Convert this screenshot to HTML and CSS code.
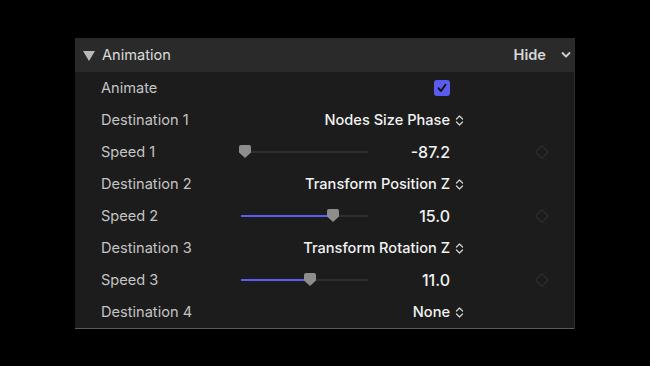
FILE: index.html
```html
<!DOCTYPE html>
<html>
<head>
<meta charset="utf-8">
<link rel="stylesheet" href="styles.css">
</head>
<body>
<div class="panel">
  <div class="header">
    <span class="disclosure"></span>
    <span class="title">Animation</span>
    <span class="hide">Hide</span>
    <svg class="chev-down" width="10" height="8" viewBox="0 0 10 8"><path d="M1.5 2 L5 5.5 L8.5 2" fill="none" stroke="#cfcfcf" stroke-width="1.8" stroke-linecap="round" stroke-linejoin="round"/></svg>
  </div>
  <div class="rows">
    <div class="row">
      <span class="label">Animate</span>
      <div class="mid"><span class="checkbox"><svg width="12" height="12" viewBox="0 0 12 12"><path d="M2.5 6.3 L5 9 L9.5 2.8" fill="none" stroke="#111" stroke-width="1.9" stroke-linecap="round" stroke-linejoin="round"/></svg></span></div>
      <span class="after"></span>
      <span class="kf-slot"></span>
    </div>
    <div class="row">
      <span class="label">Destination 1</span>
      <div class="mid"><span class="value">Nodes Size Phase</span></div>
      <span class="after"><svg class="updown" width="9" height="13" viewBox="0 0 9 13"><path d="M1.5 5 L4.5 2 L7.5 5 M1.5 8 L4.5 11 L7.5 8" fill="none" stroke="#d0d0d0" stroke-width="1.3" stroke-linecap="round" stroke-linejoin="round"/></svg></span>
      <span class="kf-slot"></span>
    </div>
    <div class="row">
      <span class="label">Speed 1</span>
      <div class="mid">
        <div class="slider"><div class="track"></div><div class="fill" style="width:4px"></div><div class="thumb" style="left:4px"></div></div>
        <span class="value num">-87.2</span>
      </div>
      <span class="after"></span>
      <span class="kf-slot"><span class="kf"></span></span>
    </div>
    <div class="row">
      <span class="label">Destination 2</span>
      <div class="mid"><span class="value">Transform Position Z</span></div>
      <span class="after"><svg class="updown" width="9" height="13" viewBox="0 0 9 13"><path d="M1.5 5 L4.5 2 L7.5 5 M1.5 8 L4.5 11 L7.5 8" fill="none" stroke="#d0d0d0" stroke-width="1.3" stroke-linecap="round" stroke-linejoin="round"/></svg></span>
      <span class="kf-slot"></span>
    </div>
    <div class="row">
      <span class="label">Speed 2</span>
      <div class="mid">
        <div class="slider"><div class="track"></div><div class="fill" style="width:92px"></div><div class="thumb" style="left:92px"></div></div>
        <span class="value num">15.0</span>
      </div>
      <span class="after"></span>
      <span class="kf-slot"><span class="kf"></span></span>
    </div>
    <div class="row">
      <span class="label">Destination 3</span>
      <div class="mid"><span class="value">Transform Rotation Z</span></div>
      <span class="after"><svg class="updown" width="9" height="13" viewBox="0 0 9 13"><path d="M1.5 5 L4.5 2 L7.5 5 M1.5 8 L4.5 11 L7.5 8" fill="none" stroke="#d0d0d0" stroke-width="1.3" stroke-linecap="round" stroke-linejoin="round"/></svg></span>
      <span class="kf-slot"></span>
    </div>
    <div class="row">
      <span class="label">Speed 3</span>
      <div class="mid">
        <div class="slider"><div class="track"></div><div class="fill" style="width:69px"></div><div class="thumb" style="left:69px"></div></div>
        <span class="value num">11.0</span>
      </div>
      <span class="after"></span>
      <span class="kf-slot"><span class="kf"></span></span>
    </div>
    <div class="row">
      <span class="label">Destination 4</span>
      <div class="mid"><span class="value">None</span></div>
      <span class="after"><svg class="updown" width="9" height="13" viewBox="0 0 9 13"><path d="M1.5 5 L4.5 2 L7.5 5 M1.5 8 L4.5 11 L7.5 8" fill="none" stroke="#d0d0d0" stroke-width="1.3" stroke-linecap="round" stroke-linejoin="round"/></svg></span>
      <span class="kf-slot"></span>
    </div>
  </div>
</div>
</body>
</html>
```
FILE: styles.css
```css
html, body {
  margin: 0;
  padding: 0;
  background: #000;
  width: 650px;
  height: 366px;
  overflow: hidden;
}
body {
  font-family: Inter, "Noto Sans", "Liberation Sans", sans-serif;
  font-size: 14.6px;
  padding-top: 38px;
  box-sizing: border-box;
}
.panel {
  margin-left: 75px;
  width: 500px;
  background: #1c1c1c;
  border-right: 1px solid #2c2c2c;
  box-sizing: border-box;
}
.header {
  height: 34px;
  background: #2a2a2a;
  display: flex;
  align-items: center;
  padding-left: 8px;
  padding-right: 3px;
}
.disclosure {
  width: 0;
  height: 0;
  border-left: 6px solid transparent;
  border-right: 6px solid transparent;
  border-top: 10px solid #b8b8b8;
  margin-right: 7px;
  margin-top: 1px;
}
.title {
  color: #dcdcdc;
  flex: 1;
}
.hide {
  color: #d8d8d8;
  font-weight: 600;
  margin-right: 15px;
}
.chev-down {
  display: block;
}
.rows {
  border-bottom: 1px solid #5a5a5a;
}
.row {
  height: 32px;
  display: flex;
  align-items: center;
  padding-left: 26px;
}
.label {
  width: 140px;
  color: #c4c4c4;
  flex: none;
}
.mid {
  width: 209px;
  display: flex;
  align-items: center;
  justify-content: flex-end;
  flex: none;
}
.value {
  color: #f2f2f2;
  font-weight: 500;
  white-space: nowrap;
}
.num {
  margin-left: auto;
  font-size: 16px;
}
.after {
  width: 20px;
  flex: none;
  display: flex;
  align-items: center;
  padding-left: 5px;
  box-sizing: border-box;
}
.updown {
  display: block;
}
.checkbox {
  width: 16px;
  height: 16px;
  border-radius: 3px;
  background: #5a5cf0;
  display: flex;
  align-items: center;
  justify-content: center;
}
.slider {
  position: relative;
  width: 127px;
  height: 14px;
  flex: none;
}
.track {
  position: absolute;
  left: 0;
  right: 0;
  top: 6px;
  height: 2px;
  background: #2f2f2f;
}
.fill {
  position: absolute;
  left: 0;
  top: 6px;
  height: 2px;
  background: #5a5cf0;
}
.thumb {
  position: absolute;
  top: 0;
  width: 12px;
  height: 13px;
  margin-left: -6px;
  background: #8d8d8d;
  border-radius: 2px 2px 0 0;
  clip-path: polygon(0 0, 100% 0, 100% 58%, 50% 100%, 0 58%);
}
.kf-slot {
  width: 120px;
  flex: none;
  display: flex;
  justify-content: center;
  padding-left: 24px;
  box-sizing: border-box;
}
.kf {
  width: 8px;
  height: 8px;
  border: 1.5px solid #333;
  transform: rotate(45deg);
  border-radius: 1px;
}
```
